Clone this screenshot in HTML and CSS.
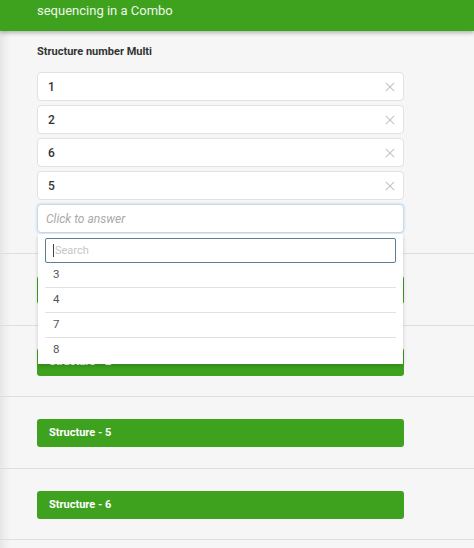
FILE: index.html
```html
<!DOCTYPE html>
<html>
<head>
<meta charset="utf-8">
<link rel="stylesheet" href="styles.css">
</head>
<body>
<header class="topbar">sequencing in a Combo</header>
<main class="page">
  <section class="section section-combo">
    <div class="inner">
      <div class="label">Structure number Multi</div>
      <div class="chips">
        <div class="chip"><span>1</span><svg class="x" viewBox="0 0 12 12"><path d="M1 1L11 11M11 1L1 11"/></svg></div>
        <div class="chip"><span>2</span><svg class="x" viewBox="0 0 12 12"><path d="M1 1L11 11M11 1L1 11"/></svg></div>
        <div class="chip"><span>6</span><svg class="x" viewBox="0 0 12 12"><path d="M1 1L11 11M11 1L1 11"/></svg></div>
        <div class="chip"><span>5</span><svg class="x" viewBox="0 0 12 12"><path d="M1 1L11 11M11 1L1 11"/></svg></div>
        <div class="answer">Click to answer</div>
      </div>
    </div>
  </section>
  <section class="section"><div class="inner"><div class="btn"></div></div></section>
  <section class="section"><div class="inner"><div class="btn">Structure - 2</div></div></section>
  <section class="section"><div class="inner"><div class="btn">Structure - 5</div></div></section>
  <section class="section"><div class="inner"><div class="btn">Structure - 6</div></div></section>

  <div class="dropdown">
    <div class="search"><span class="caret"></span>Search</div>
    <ul class="options">
      <li>3</li>
      <li>4</li>
      <li>7</li>
      <li>8</li>
    </ul>
  </div>
</main>
</body>
</html>
```
FILE: styles.css
```css
* { box-sizing: border-box; }
html, body { margin: 0; padding: 0; }
body {
  width: 474px;
  height: 548px;
  overflow: hidden;
  font-family: Roboto, "Liberation Sans", sans-serif;
  background: linear-gradient(to right, #e6e6e6 0, #efefef 5px, #f6f6f6 11px, #f6f6f6 100%);
  position: relative;
}
.topbar {
  height: 31px;
  background: #3ea21f;
  color: #eef7e8;
  font-size: 13px;
  line-height: 22px;
  padding-left: 37px;
  box-shadow: 0 2px 4px rgba(0,0,0,0.28);
  position: relative;
  z-index: 2;
}
.page { position: relative; }
.section {
  border-bottom: 1px solid #dedede;
  padding: 22px 0 20.5px;
}
.section-combo { padding: 14px 0 20px; }
.inner { margin-left: 37px; width: 367px; }
.label {
  font-size: 11px;
  font-weight: 700;
  color: #333;
  line-height: 14px;
  margin-bottom: 13px;
}
.chips { display: flex; flex-direction: column; gap: 4px; }
.chip, .answer {
  height: 29px;
  background: #fff;
  border: 1px solid #e2e2e2;
  border-radius: 4px;
  display: flex;
  align-items: center;
  justify-content: space-between;
  padding: 0 8px 0 10px;
  font-size: 12px;
  font-weight: 500;
  color: #333;
}
.x { width: 10px; height: 10px; fill: none; stroke: #c4c4c4; stroke-width: 1.3; }
.answer {
  border-color: #c3d9ec;
  box-shadow: 0 0 3px rgba(120,170,220,0.45);
  font-style: italic;
  font-weight: 400;
  color: #a9a9a9;
  padding-left: 8px;
}
.btn {
  height: 28px;
  background: #3ea21f;
  border-radius: 3px;
  color: #fff;
  font-size: 11px;
  font-weight: 700;
  line-height: 28px;
  padding-left: 12px;
}
.dropdown {
  position: absolute;
  top: 203px;
  left: 38px;
  width: 365px;
  height: 130px;
  background: #fff;
  box-shadow: 0 2px 4px rgba(0,0,0,0.18);
  padding: 4px 7px 0;
  z-index: 3;
}
.search {
  height: 25px;
  border: 1px solid #5c7d94;
  border-radius: 2px;
  font-size: 11px;
  color: #c6c6c6;
  display: flex;
  align-items: center;
  padding-left: 7px;
}
.caret { width: 1px; height: 13px; background: #444; margin-right: 1px; }
.options { list-style: none; margin: 0; padding: 0; }
.options li {
  height: 25px;
  line-height: 22px;
  font-size: 11.5px;
  color: #555;
  padding-left: 8px;
  border-bottom: 1px solid #e2e2e2;
}
.options li:last-child { border-bottom: none; }
```
